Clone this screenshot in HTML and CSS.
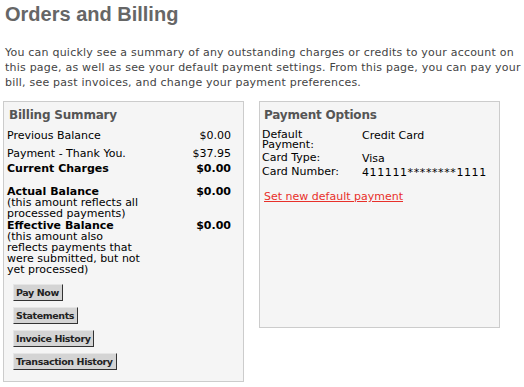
FILE: index.html
```html
<!DOCTYPE html>
<html>
	<head>
		<meta charset="UTF-8">
		<title>Orders and Billing</title>
		<link rel="stylesheet" href="styles.css">
	</head>
	<body>
		<div class="page">
			<h1 class="title">Orders and Billing</h1>
			<p class="intro">You can quickly see a summary of any outstanding charges or credits to your account on this page, as well as see your default payment settings. From this page, you can pay your bill, see past invoices, and change your payment preferences.</p>
			<div class="boxes">
				<div class="box summary">
					<h2>Billing Summary</h2>
					<div class="sum_list">
						<div class="row r1">
							<span class="txt">Previous Balance</span>
							<span class="amt">$0.00</span>
						</div>
						<div class="row r2">
							<span class="txt">Payment - Thank You.</span>
							<span class="amt">$37.95</span>
						</div>
						<div class="row r3 b">
							<span class="txt">Current Charges</span>
							<span class="amt">$0.00</span>
						</div>
						<div class="row r4 b">
							<span class="txt">Actual Balance<em>(this amount reflects all processed payments)</em></span>
							<span class="amt">$0.00</span>
						</div>
						<div class="row r5 b">
							<span class="txt">Effective Balance<em>(this amount also reflects payments that were submitted, but not yet processed)</em></span>
							<span class="amt">$0.00</span>
						</div>
					</div>
					<div class="btns">
						<a href="javascript:;" class="btn">Pay Now</a>
						<a href="javascript:;" class="btn">Statements</a>
						<a href="javascript:;" class="btn">Invoice History</a>
						<a href="javascript:;" class="btn">Transaction History</a>
					</div>
				</div>
				<div class="box options">
					<h2>Payment Options</h2>
					<table class="opt_tab">
						<tr>
							<td class="lbl">Default Payment:</td>
							<td class="val">Credit Card</td>
						</tr>
						<tr>
							<td class="lbl">Card Type:</td>
							<td class="val">Visa</td>
						</tr>
						<tr>
							<td class="lbl">Card Number:</td>
							<td class="val num">411111********1111</td>
						</tr>
					</table>
					<a href="javascript:;" class="set_link">Set new default payment</a>
				</div>
			</div>
		</div>
	</body>
</html>
```

FILE: styles.css
```css
body,
h1,
h2,
p,
table,
td {
    margin: 0;
    padding: 0;
}

body {
    background: #fff;
    font-family: "DejaVu Sans", Verdana, sans-serif;
    font-size: 11px;
    color: #000;
}

a {
    text-decoration: none;
}

em {
    font-style: normal;
}

.page {
    padding: 3px 3px 0;
}

.title {
    font: bold 20px/22px "Liberation Sans", Arial, sans-serif;
    color: #666;
    padding-left: 2px;
}

.intro {
    margin: 20px 0 11px;
    padding-left: 2px;
    width: 518px;
    font-size: 11px;
    line-height: 15px;
    letter-spacing: 0.22px;
    color: #444;
}

.boxes {
    display: flex;
    align-items: flex-start;
    gap: 15px;
}

.box {
    width: 239px;
    background: #f5f5f5;
    border: 1px solid #ccc;
}

.box h2 {
    font-size: 12px;
    line-height: 14px;
    font-weight: bold;
    color: #555;
    letter-spacing: -0.2px;
    padding: 6px 5px 8px;
}

.summary {
    height: 279px;
}

.options {
    height: 225px;
}

.options h2 {
    padding-left: 4px;
}

.sum_list {
    padding: 0 12px 0 3px;
}

.row {
    display: flex;
    justify-content: space-between;
    align-items: flex-start;
    line-height: 11px;
}

.row.b {
    font-weight: bold;
}

.row em {
    display: block;
    width: 134px;
    font-weight: normal;
    line-height: 11px;
}

.r2 {
    margin-top: 7px;
}

.r3 {
    margin-top: 4px;
}

.r4 {
    margin-top: 12px;
}

.r5 {
    margin-top: 1px;
}

.btns {
    display: flex;
    flex-direction: column;
    align-items: flex-start;
    gap: 6px;
    padding: 9px 0 0 9px;
}

.btn {
    display: block;
    background: #d4d4d4;
    border-top: 1px solid #e6e6e6;
    border-left: 1px solid #e6e6e6;
    border-right: 1px solid #333;
    border-bottom: 1px solid #333;
    color: #222;
    font-weight: bold;
    font-size: 9.5px;
    letter-spacing: -0.4px;
    line-height: 15px;
    padding: 0 3px 0 2px;
}

.opt_tab {
    border-collapse: collapse;
    margin-left: 2px;
}

.opt_tab td {
    vertical-align: top;
    line-height: 10px;
    padding: 0 0 3px;
    font-size: 11px;
}

.opt_tab .lbl {
    width: 90px;
    padding-right: 10px;
}

.opt_tab .val {
    padding-top: 1px;
}

.opt_tab .num {
    letter-spacing: 0.6px;
}

.set_link {
    display: inline-block;
    margin: 9px 0 0 4px;
    color: #e8302a;
    text-decoration: underline;
}
```
